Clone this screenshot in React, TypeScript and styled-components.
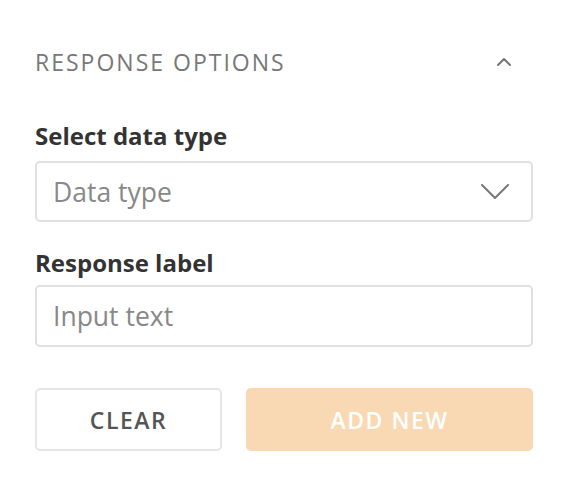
import React from "react";
import styled, { createGlobalStyle } from "styled-components";

const GlobalStyle = createGlobalStyle`
  html, body {
    margin: 0;
    padding: 0;
    background: #fff;
    font-family: "Open Sans", "Liberation Sans", sans-serif;
  }
`;

const Panel = styled.section`
  width: 498px;
  padding: 44px 0 0 35px;
  box-sizing: content-box;
`;

const Header = styled.div`
  display: flex;
  align-items: center;
  justify-content: space-between;
  height: 36px;
  padding-right: 22px;
`;

const Title = styled.h2`
  margin: 0;
  font-size: 23px;
  font-weight: 500;
  letter-spacing: 2px;
  color: #777;
  text-transform: uppercase;
`;

const Field = styled.div<{ $top: number }>`
  display: flex;
  flex-direction: column;
  margin-top: ${(p) => p.$top}px;
`;

const Label = styled.label<{ $gap: number }>`
  font-size: 24px;
  font-weight: 700;
  color: #333;
  line-height: 32px;
  margin-bottom: ${(p) => p.$gap}px;
`;

const Box = styled.div<{ $h: number }>`
  height: ${(p) => p.$h}px;
  box-sizing: border-box;
  border: 2px solid #e0e0e0;
  border-radius: 5px;
  display: flex;
  align-items: center;
  justify-content: space-between;
  padding: 0 22px 0 16px;
  font-size: 26.5px;
  color: #888;
`;

const Actions = styled.div`
  display: flex;
  gap: 24px;
  margin-top: 41px;
`;

const Button = styled.button<{ $primary?: boolean; $w: number }>`
  width: ${(p) => p.$w}px;
  height: 63px;
  box-sizing: border-box;
  border-radius: 5px;
  border: ${(p) => (p.$primary ? "none" : "2px solid #e6e6e6")};
  background: ${(p) => (p.$primary ? "#f9d9b3" : "#fff")};
  color: ${(p) => (p.$primary ? "#fff" : "#555")};
  font-family: inherit;
  font-size: 23px;
  font-weight: 600;
  letter-spacing: 1.5px;
  text-transform: uppercase;
`;

const Chevron = ({ w, h, up }: { w: number; h: number; up?: boolean }) => (
  <svg width={w} height={h} viewBox={`0 0 ${w} ${h}`} fill="none">
    <polyline
      points={up ? `1,${h - 1} ${w / 2},1 ${w - 1},${h - 1}` : `1,1 ${w / 2},${h - 1} ${w - 1},1`}
      stroke="#777"
      strokeWidth="2"
      strokeLinecap="round"
      strokeLinejoin="round"
    />
  </svg>
);

export default function App() {
  return (
    <>
      <GlobalStyle />
      <Panel>
        <Header>
          <Title>Response options</Title>
          <Chevron w={14} h={8} up />
        </Header>
        <Field $top={40}>
          <Label $gap={9}>Select data type</Label>
          <Box $h={61}>
            Data type
            <Chevron w={28} h={15} />
          </Box>
        </Field>
        <Field $top={25}>
          <Label $gap={6}>Response label</Label>
          <Box $h={62}>Input text</Box>
        </Field>
        <Actions>
          <Button $w={187}>Clear</Button>
          <Button $w={287} $primary>
            Add new
          </Button>
        </Actions>
      </Panel>
    </>
  );
}
